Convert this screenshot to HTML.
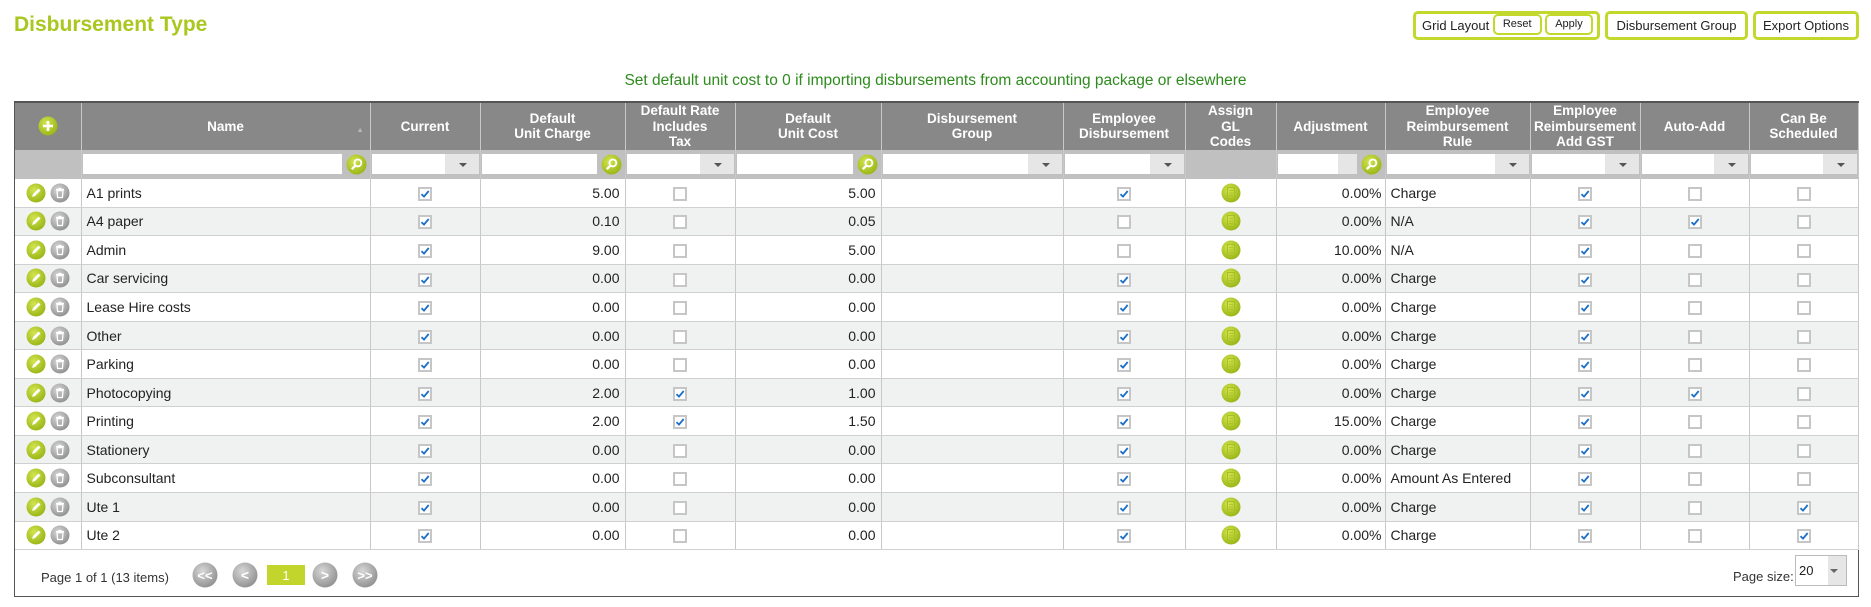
<!DOCTYPE html>
<html><head><meta charset="utf-8">
<style>
*{box-sizing:border-box}
body{margin:0;width:1871px;height:607px;background:#fff;font-family:"Liberation Sans",Arial,sans-serif;color:#222;position:relative;overflow:hidden}
.title{position:absolute;left:14px;top:13px;font-size:21px;font-weight:bold;color:#a9c71f}
.btn{position:absolute;top:11px;height:29px;border:3px solid #c3d82c;border-radius:5px;font-size:13px;line-height:23px;color:#222;background:#fff;white-space:nowrap;text-align:center}
.sb{display:inline-block;height:21px;border:2px solid #c3d82c;border-radius:5px;font-size:11px;line-height:17px;padding:0 8px;vertical-align:top;margin-top:0}
.note{position:absolute;left:0;width:1871px;top:72px;text-align:center;color:#2e8b1d;font-size:15.5px}
.grid{position:absolute;left:14px;top:101px;width:1845px;height:496px;border:1px solid #555;border-top:2px solid #555}
table{border-collapse:collapse;table-layout:fixed;width:1843px;font-size:14px}
th{background:#888;color:#fff;font-weight:bold;height:46px;border-right:1px solid #c8c8c8;line-height:15.5px;padding:0 2px;text-align:center;font-size:13.5px}
tr.f td{background:#c0c0c0;height:29px;padding:0 1px;border-right:1px solid #c8c8c8;position:relative}
tr.r td{height:28.55px;border-right:1px solid #c8c8c8;border-bottom:1px solid #d0d0d0;padding:0 5px;white-space:nowrap}
tr.r:nth-child(even) td{background:#f0f1f1}
td.n{text-align:right}td.m{text-align:center}
.inp{display:block;height:20px;background:#fff;position:relative}
.dd:after{content:"";position:absolute;right:0;top:0;width:34px;height:20px;background:#e6e6e6}
.dd:before{content:"";position:absolute;right:12px;top:9px;border:4px solid transparent;border-top:4px solid #555;border-bottom:0;z-index:2}
.s{position:absolute;top:4px;width:21px;height:21px}
.cb{display:inline-block;width:14px;height:14px;border:2px solid #c6c6c6;background:#fff;vertical-align:middle;position:relative}
.cb svg{position:absolute;left:0;top:0}
.ic{width:20px;height:20px;vertical-align:middle}
.pg{position:absolute;left:26px;top:467px;font-size:13px;color:#333}
</style></head><body>
<svg width="0" height="0" style="position:absolute">
<defs>
<radialGradient id="g" cx="40%" cy="35%" r="70%"><stop offset="0" stop-color="#d4e450"/><stop offset="1" stop-color="#96b415"/></radialGradient>
<radialGradient id="h" cx="40%" cy="35%" r="70%"><stop offset="0" stop-color="#d8d8d8"/><stop offset="1" stop-color="#8e8e8e"/></radialGradient>
<symbol id="ck" viewBox="0 0 10 10"><path d="M1.5 5.2 L4 7.6 L8.7 2" fill="none" stroke="#1a6fc9" stroke-width="1.8"/></symbol>
<symbol id="ed" viewBox="0 0 20 20"><circle cx="10" cy="10" r="9.5" fill="url(#g)"/><path d="M6 14 L7 11 L12.5 5.5 L14.5 7.5 L9 13 Z" fill="#fff"/></symbol>
<symbol id="tr" viewBox="0 0 20 20"><circle cx="10" cy="10" r="9.5" fill="url(#h)"/><path d="M6 6.5h8M8.5 5.5h3M7 7.5h6l-.6 7h-4.8z" fill="none" stroke="#fff" stroke-width="1.3"/><path d="M9 9v4M11 9v4" stroke="#aaa" stroke-width=".8"/></symbol>
<symbol id="gl" viewBox="0 0 20 20"><circle cx="10" cy="10" r="9.5" fill="url(#g)"/><rect x="6.5" y="4.5" width="7" height="11" fill="none" stroke="#a8c020" stroke-width="1"/><path d="M8 7.5h4M8 10h4M8 12.5h4" stroke="#a8c020" stroke-width=".8"/></symbol>
<symbol id="ad" viewBox="0 0 20 20"><circle cx="10" cy="10" r="9.5" fill="url(#g)"/><path d="M10 5v10M5 10h10" stroke="#fff" stroke-width="2.6"/></symbol>
<symbol id="se" viewBox="0 0 20 20"><circle cx="10" cy="10" r="9.5" fill="url(#g)"/><circle cx="11.3" cy="8.5" r="3.3" fill="none" stroke="#fff" stroke-width="1.8"/><path d="M9 11 L5.5 14.5" stroke="#fff" stroke-width="2.2"/></symbol>
</defs></svg>

<div class="title">Disbursement Type</div>
<div class="btn" style="left:1413px;width:187px;text-align:left;padding-left:6px">Grid Layout <span class="sb">Reset</span> <span class="sb">Apply</span></div>
<div class="btn" style="left:1605px;width:143px">Disbursement Group</div>
<div class="btn" style="left:1753px;width:106px">Export Options</div>
<div class="note">Set default unit cost to 0 if importing disbursements from accounting package or elsewhere</div>

<div class="grid">
<table>
<colgroup><col style="width:66px"><col style="width:289px"><col style="width:110px"><col style="width:145px"><col style="width:110px"><col style="width:146px"><col style="width:182px"><col style="width:122px"><col style="width:91px"><col style="width:109px"><col style="width:145px"><col style="width:110px"><col style="width:109px"><col style="width:109px"></colgroup>
<tr><th><svg class="ic"><use href="#ad"/></svg></th><th style="position:relative">Name<span style="position:absolute;right:6px;top:20px;font-size:7px;color:#bbb">▲</span></th><th>Current</th><th>Default<br>Unit Charge</th><th>Default Rate<br>Includes<br>Tax</th><th>Default<br>Unit Cost</th><th>Disbursement<br>Group</th><th>Employee<br>Disbursement</th><th>Assign<br>GL<br>Codes</th><th>Adjustment</th><th>Employee<br>Reimbursement<br>Rule</th><th>Employee<br>Reimbursement<br>Add GST</th><th>Auto-Add</th><th>Can Be<br>Scheduled</th></tr>
<tr class="f"><td></td>
<td><span class="inp" style="margin-right:27px"></span><svg class="s" style="right:3px"><use href="#se"/></svg></td>
<td><span class="inp dd"></span></td>
<td><span class="inp" style="margin-right:27px"></span><svg class="s" style="right:3px"><use href="#se"/></svg></td>
<td><span class="inp dd"></span></td>
<td><span class="inp" style="margin-right:27px"></span><svg class="s" style="right:3px"><use href="#se"/></svg></td>
<td><span class="inp dd"></span></td>
<td><span class="inp dd"></span></td>
<td></td>
<td><span class="inp" style="margin-right:27px;background:linear-gradient(90deg,#fff 60px,#e6e6e6 60px)"></span><svg class="s" style="right:3px"><use href="#se"/></svg></td>
<td><span class="inp dd"></span></td>
<td><span class="inp dd"></span></td>
<td><span class="inp dd"></span></td>
<td><span class="inp dd"></span></td></tr>

<tr class="r"><td class="m" style="padding:0 2px"><svg class="ic"><use href="#ed"/></svg> <svg class="ic"><use href="#tr"/></svg></td><td>A1 prints</td><td class="m"><span class="cb"><svg width="10" height="10"><use href="#ck"/></svg></span></td><td class="n">5.00</td><td class="m"><span class="cb"></span></td><td class="n">5.00</td><td></td><td class="m"><span class="cb"><svg width="10" height="10"><use href="#ck"/></svg></span></td><td class="m"><svg class="ic"><use href="#gl"/></svg></td><td class="n" style="padding-right:3px">0.00%</td><td>Charge</td><td class="m"><span class="cb"><svg width="10" height="10"><use href="#ck"/></svg></span></td><td class="m"><span class="cb"></span></td><td class="m"><span class="cb"></span></td></tr>
<tr class="r"><td class="m" style="padding:0 2px"><svg class="ic"><use href="#ed"/></svg> <svg class="ic"><use href="#tr"/></svg></td><td>A4 paper</td><td class="m"><span class="cb"><svg width="10" height="10"><use href="#ck"/></svg></span></td><td class="n">0.10</td><td class="m"><span class="cb"></span></td><td class="n">0.05</td><td></td><td class="m"><span class="cb"></span></td><td class="m"><svg class="ic"><use href="#gl"/></svg></td><td class="n" style="padding-right:3px">0.00%</td><td>N/A</td><td class="m"><span class="cb"><svg width="10" height="10"><use href="#ck"/></svg></span></td><td class="m"><span class="cb"><svg width="10" height="10"><use href="#ck"/></svg></span></td><td class="m"><span class="cb"></span></td></tr>
<tr class="r"><td class="m" style="padding:0 2px"><svg class="ic"><use href="#ed"/></svg> <svg class="ic"><use href="#tr"/></svg></td><td>Admin</td><td class="m"><span class="cb"><svg width="10" height="10"><use href="#ck"/></svg></span></td><td class="n">9.00</td><td class="m"><span class="cb"></span></td><td class="n">5.00</td><td></td><td class="m"><span class="cb"></span></td><td class="m"><svg class="ic"><use href="#gl"/></svg></td><td class="n" style="padding-right:3px">10.00%</td><td>N/A</td><td class="m"><span class="cb"><svg width="10" height="10"><use href="#ck"/></svg></span></td><td class="m"><span class="cb"></span></td><td class="m"><span class="cb"></span></td></tr>
<tr class="r"><td class="m" style="padding:0 2px"><svg class="ic"><use href="#ed"/></svg> <svg class="ic"><use href="#tr"/></svg></td><td>Car servicing</td><td class="m"><span class="cb"><svg width="10" height="10"><use href="#ck"/></svg></span></td><td class="n">0.00</td><td class="m"><span class="cb"></span></td><td class="n">0.00</td><td></td><td class="m"><span class="cb"><svg width="10" height="10"><use href="#ck"/></svg></span></td><td class="m"><svg class="ic"><use href="#gl"/></svg></td><td class="n" style="padding-right:3px">0.00%</td><td>Charge</td><td class="m"><span class="cb"><svg width="10" height="10"><use href="#ck"/></svg></span></td><td class="m"><span class="cb"></span></td><td class="m"><span class="cb"></span></td></tr>
<tr class="r"><td class="m" style="padding:0 2px"><svg class="ic"><use href="#ed"/></svg> <svg class="ic"><use href="#tr"/></svg></td><td>Lease Hire costs</td><td class="m"><span class="cb"><svg width="10" height="10"><use href="#ck"/></svg></span></td><td class="n">0.00</td><td class="m"><span class="cb"></span></td><td class="n">0.00</td><td></td><td class="m"><span class="cb"><svg width="10" height="10"><use href="#ck"/></svg></span></td><td class="m"><svg class="ic"><use href="#gl"/></svg></td><td class="n" style="padding-right:3px">0.00%</td><td>Charge</td><td class="m"><span class="cb"><svg width="10" height="10"><use href="#ck"/></svg></span></td><td class="m"><span class="cb"></span></td><td class="m"><span class="cb"></span></td></tr>
<tr class="r"><td class="m" style="padding:0 2px"><svg class="ic"><use href="#ed"/></svg> <svg class="ic"><use href="#tr"/></svg></td><td>Other</td><td class="m"><span class="cb"><svg width="10" height="10"><use href="#ck"/></svg></span></td><td class="n">0.00</td><td class="m"><span class="cb"></span></td><td class="n">0.00</td><td></td><td class="m"><span class="cb"><svg width="10" height="10"><use href="#ck"/></svg></span></td><td class="m"><svg class="ic"><use href="#gl"/></svg></td><td class="n" style="padding-right:3px">0.00%</td><td>Charge</td><td class="m"><span class="cb"><svg width="10" height="10"><use href="#ck"/></svg></span></td><td class="m"><span class="cb"></span></td><td class="m"><span class="cb"></span></td></tr>
<tr class="r"><td class="m" style="padding:0 2px"><svg class="ic"><use href="#ed"/></svg> <svg class="ic"><use href="#tr"/></svg></td><td>Parking</td><td class="m"><span class="cb"><svg width="10" height="10"><use href="#ck"/></svg></span></td><td class="n">0.00</td><td class="m"><span class="cb"></span></td><td class="n">0.00</td><td></td><td class="m"><span class="cb"><svg width="10" height="10"><use href="#ck"/></svg></span></td><td class="m"><svg class="ic"><use href="#gl"/></svg></td><td class="n" style="padding-right:3px">0.00%</td><td>Charge</td><td class="m"><span class="cb"><svg width="10" height="10"><use href="#ck"/></svg></span></td><td class="m"><span class="cb"></span></td><td class="m"><span class="cb"></span></td></tr>
<tr class="r"><td class="m" style="padding:0 2px"><svg class="ic"><use href="#ed"/></svg> <svg class="ic"><use href="#tr"/></svg></td><td>Photocopying</td><td class="m"><span class="cb"><svg width="10" height="10"><use href="#ck"/></svg></span></td><td class="n">2.00</td><td class="m"><span class="cb"><svg width="10" height="10"><use href="#ck"/></svg></span></td><td class="n">1.00</td><td></td><td class="m"><span class="cb"><svg width="10" height="10"><use href="#ck"/></svg></span></td><td class="m"><svg class="ic"><use href="#gl"/></svg></td><td class="n" style="padding-right:3px">0.00%</td><td>Charge</td><td class="m"><span class="cb"><svg width="10" height="10"><use href="#ck"/></svg></span></td><td class="m"><span class="cb"><svg width="10" height="10"><use href="#ck"/></svg></span></td><td class="m"><span class="cb"></span></td></tr>
<tr class="r"><td class="m" style="padding:0 2px"><svg class="ic"><use href="#ed"/></svg> <svg class="ic"><use href="#tr"/></svg></td><td>Printing</td><td class="m"><span class="cb"><svg width="10" height="10"><use href="#ck"/></svg></span></td><td class="n">2.00</td><td class="m"><span class="cb"><svg width="10" height="10"><use href="#ck"/></svg></span></td><td class="n">1.50</td><td></td><td class="m"><span class="cb"><svg width="10" height="10"><use href="#ck"/></svg></span></td><td class="m"><svg class="ic"><use href="#gl"/></svg></td><td class="n" style="padding-right:3px">15.00%</td><td>Charge</td><td class="m"><span class="cb"><svg width="10" height="10"><use href="#ck"/></svg></span></td><td class="m"><span class="cb"></span></td><td class="m"><span class="cb"></span></td></tr>
<tr class="r"><td class="m" style="padding:0 2px"><svg class="ic"><use href="#ed"/></svg> <svg class="ic"><use href="#tr"/></svg></td><td>Stationery</td><td class="m"><span class="cb"><svg width="10" height="10"><use href="#ck"/></svg></span></td><td class="n">0.00</td><td class="m"><span class="cb"></span></td><td class="n">0.00</td><td></td><td class="m"><span class="cb"><svg width="10" height="10"><use href="#ck"/></svg></span></td><td class="m"><svg class="ic"><use href="#gl"/></svg></td><td class="n" style="padding-right:3px">0.00%</td><td>Charge</td><td class="m"><span class="cb"><svg width="10" height="10"><use href="#ck"/></svg></span></td><td class="m"><span class="cb"></span></td><td class="m"><span class="cb"></span></td></tr>
<tr class="r"><td class="m" style="padding:0 2px"><svg class="ic"><use href="#ed"/></svg> <svg class="ic"><use href="#tr"/></svg></td><td>Subconsultant</td><td class="m"><span class="cb"><svg width="10" height="10"><use href="#ck"/></svg></span></td><td class="n">0.00</td><td class="m"><span class="cb"></span></td><td class="n">0.00</td><td></td><td class="m"><span class="cb"><svg width="10" height="10"><use href="#ck"/></svg></span></td><td class="m"><svg class="ic"><use href="#gl"/></svg></td><td class="n" style="padding-right:3px">0.00%</td><td>Amount As Entered</td><td class="m"><span class="cb"><svg width="10" height="10"><use href="#ck"/></svg></span></td><td class="m"><span class="cb"></span></td><td class="m"><span class="cb"></span></td></tr>
<tr class="r"><td class="m" style="padding:0 2px"><svg class="ic"><use href="#ed"/></svg> <svg class="ic"><use href="#tr"/></svg></td><td>Ute 1</td><td class="m"><span class="cb"><svg width="10" height="10"><use href="#ck"/></svg></span></td><td class="n">0.00</td><td class="m"><span class="cb"></span></td><td class="n">0.00</td><td></td><td class="m"><span class="cb"><svg width="10" height="10"><use href="#ck"/></svg></span></td><td class="m"><svg class="ic"><use href="#gl"/></svg></td><td class="n" style="padding-right:3px">0.00%</td><td>Charge</td><td class="m"><span class="cb"><svg width="10" height="10"><use href="#ck"/></svg></span></td><td class="m"><span class="cb"></span></td><td class="m"><span class="cb"><svg width="10" height="10"><use href="#ck"/></svg></span></td></tr>
<tr class="r"><td class="m" style="padding:0 2px"><svg class="ic"><use href="#ed"/></svg> <svg class="ic"><use href="#tr"/></svg></td><td>Ute 2</td><td class="m"><span class="cb"><svg width="10" height="10"><use href="#ck"/></svg></span></td><td class="n">0.00</td><td class="m"><span class="cb"></span></td><td class="n">0.00</td><td></td><td class="m"><span class="cb"><svg width="10" height="10"><use href="#ck"/></svg></span></td><td class="m"><svg class="ic"><use href="#gl"/></svg></td><td class="n" style="padding-right:3px">0.00%</td><td>Charge</td><td class="m"><span class="cb"><svg width="10" height="10"><use href="#ck"/></svg></span></td><td class="m"><span class="cb"></span></td><td class="m"><span class="cb"><svg width="10" height="10"><use href="#ck"/></svg></span></td></tr>
</table>
<div class="pg">Page 1 of 1 (13 items)</div>
<svg style="position:absolute;left:177px;top:458px" width="220" height="30">
<circle cx="13" cy="14" r="12.5" fill="url(#h)"/><text x="13" y="19" text-anchor="middle" fill="#fff" font-size="13" font-weight="bold" font-family="Liberation Sans">&lt;&lt;</text>
<circle cx="53" cy="14" r="12.5" fill="url(#h)"/><text x="53" y="19" text-anchor="middle" fill="#fff" font-size="14" font-weight="bold" font-family="Liberation Sans">&lt;</text>
<rect x="75" y="4" width="38" height="20" fill="#c2d52c"/><text x="94" y="19" text-anchor="middle" fill="#fff" font-size="13" font-family="Liberation Sans">1</text>
<circle cx="133" cy="14" r="12.5" fill="url(#h)"/><text x="133" y="19" text-anchor="middle" fill="#fff" font-size="14" font-weight="bold" font-family="Liberation Sans">&gt;</text>
<circle cx="173" cy="14" r="12.5" fill="url(#h)"/><text x="173" y="19" text-anchor="middle" fill="#fff" font-size="13" font-weight="bold" font-family="Liberation Sans">&gt;&gt;</text>
</svg>
<div style="position:absolute;left:1718px;top:466px;font-size:13px;color:#333">Page size:</div>
<div style="position:absolute;left:1780px;top:452px;width:52px;height:31px;border:1px solid #bbb;background:linear-gradient(90deg,#fff 32px,#e6e6e6 32px);font-size:13px;line-height:29px;padding-left:3px">20<span style="position:absolute;right:8px;top:13px;border:4px solid transparent;border-top:4px solid #666;border-bottom:0"></span></div>
</div>
</body></html>
